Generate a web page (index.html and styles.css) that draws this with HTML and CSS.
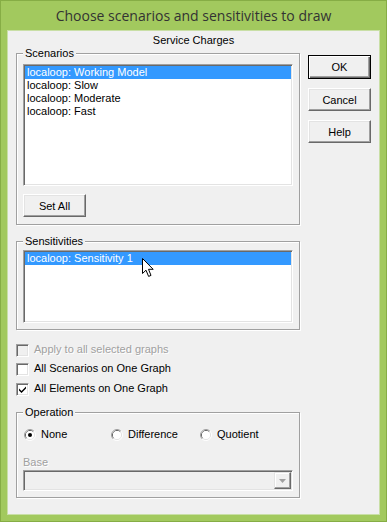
FILE: index.html
```html
<!DOCTYPE html>
<html lang="en">

<head>
  <meta charset="UTF-8">
  <title>Choose scenarios and sensitivities to draw</title>
  <link rel="stylesheet" href="styles.css">
</head>

<body>
  <div class="window">
    <!-- title bar -->
    <div class="titlebar">Choose scenarios and sensitivities to draw</div>

    <div class="client">
      <div class="caption">Service Charges</div>

      <div class="dialog-body">
        <div class="left-col">
          <!-- scenarios -->
          <fieldset class="group group-scenarios">
            <legend>Scenarios</legend>
            <div class="listbox list-scenarios">
              <div class="item selected">localoop: Working Model</div>
              <div class="item">localoop: Slow</div>
              <div class="item">localoop: Moderate</div>
              <div class="item">localoop: Fast</div>
            </div>
            <button class="btn btn-setall">Set All</button>
          </fieldset>

          <!-- sensitivities -->
          <fieldset class="group group-sens">
            <legend>Sensitivities</legend>
            <div class="listbox list-sens">
              <div class="item selected">localoop: Sensitivity 1</div>
              <svg class="cursor" width="13" height="20" viewBox="0 0 13 20">
                <path d="M0.5 0.5 L0.5 15.5 L4 12.2 L6.6 18.4 L9 17.4 L6.5 11.3 L11.2 11.3 Z" fill="#fff" stroke="#000" stroke-width="1" stroke-linejoin="miter"/>
              </svg>
            </div>
          </fieldset>

          <!-- options -->
          <div class="checks">
            <div class="check disabled"><span class="box"></span>Apply to all selected graphs</div>
            <div class="check"><span class="box"></span>All Scenarios on One Graph</div>
            <div class="check"><span class="box">
                <svg width="9" height="9" viewBox="0 0 9 9">
                  <path d="M1 3.5 L3.5 6 L8 1.5 L8 3.5 L3.5 8 L1 5.5 Z" fill="#000"/>
                </svg>
              </span>All Elements on One Graph</div>
          </div>

          <!-- operation -->
          <fieldset class="group group-op">
            <legend>Operation</legend>
            <div class="radios">
              <div class="radio">
                <svg class="radio-mark" width="12" height="12" viewBox="0 0 12 12">
                  <path d="M2.11 9.89 A5.5 5.5 0 0 1 9.89 2.11" fill="none" stroke="#a0a0a0"/>
                  <path d="M9.89 2.11 A5.5 5.5 0 0 1 2.11 9.89" fill="none" stroke="#fff"/>
                  <path d="M2.82 9.18 A4.5 4.5 0 0 1 9.18 2.82" fill="none" stroke="#696969"/>
                  <path d="M9.18 2.82 A4.5 4.5 0 0 1 2.82 9.18" fill="none" stroke="#e3e3e3"/>
                  <circle cx="6" cy="6" r="4" fill="#fff"/>
                  <circle cx="6" cy="6" r="2" fill="#000"/>
                </svg>
                None
              </div>
              <div class="radio">
                <svg class="radio-mark" width="12" height="12" viewBox="0 0 12 12">
                  <path d="M2.11 9.89 A5.5 5.5 0 0 1 9.89 2.11" fill="none" stroke="#a0a0a0"/>
                  <path d="M9.89 2.11 A5.5 5.5 0 0 1 2.11 9.89" fill="none" stroke="#fff"/>
                  <path d="M2.82 9.18 A4.5 4.5 0 0 1 9.18 2.82" fill="none" stroke="#696969"/>
                  <path d="M9.18 2.82 A4.5 4.5 0 0 1 2.82 9.18" fill="none" stroke="#e3e3e3"/>
                  <circle cx="6" cy="6" r="4" fill="#fff"/>
                </svg>
                Difference
              </div>
              <div class="radio">
                <svg class="radio-mark" width="12" height="12" viewBox="0 0 12 12">
                  <path d="M2.11 9.89 A5.5 5.5 0 0 1 9.89 2.11" fill="none" stroke="#a0a0a0"/>
                  <path d="M9.89 2.11 A5.5 5.5 0 0 1 2.11 9.89" fill="none" stroke="#fff"/>
                  <path d="M2.82 9.18 A4.5 4.5 0 0 1 9.18 2.82" fill="none" stroke="#696969"/>
                  <path d="M9.18 2.82 A4.5 4.5 0 0 1 2.82 9.18" fill="none" stroke="#e3e3e3"/>
                  <circle cx="6" cy="6" r="4" fill="#fff"/>
                </svg>
                Quotient
              </div>
            </div>
            <div class="base-label">Base</div>
            <div class="combo">
              <span class="combo-btn">
                <svg width="7" height="4" viewBox="0 0 7 4">
                  <path d="M0 0 L7 0 L3.5 4 Z" fill="#a0a0a0"/>
                </svg>
              </span>
            </div>
          </fieldset>
        </div>

        <!-- dialog buttons -->
        <div class="right-col">
          <button class="btn btn-default">OK</button>
          <button class="btn">Cancel</button>
          <button class="btn">Help</button>
        </div>
      </div>
    </div>
  </div>
</body>

</html>
```

FILE: styles.css
```css
/* page */
html,
body {
  margin: 0;
  padding: 0;
  background-color: #a2c95e;
}

/* window frame */
.window {
  width: 387px;
  height: 522px;
  box-sizing: border-box;
  border: 1px solid #86ad45;
  background-color: #a2c95e;
  padding: 0 6px 6px;
  display: flex;
  flex-direction: column;
}

.titlebar {
  height: 29px;
  line-height: 29px;
  text-align: center;
  font-family: "Open Sans", sans-serif;
  font-size: 14px;
  color: #333;
  white-space: nowrap;
}

/* client area */
.client {
  flex: 1;
  border: 1px solid #c9dfa6;
  background-color: #f0f0f0;
  font-family: "Liberation Sans", Arial, sans-serif;
  font-size: 11px;
  line-height: 13px;
  color: #000;
  padding: 3px 0 0 8px;
}

.caption {
  text-align: center;
  margin-left: -8px;
  height: 13px;
}

.dialog-body {
  display: flex;
  gap: 8px;
}

.left-col {
  width: 284px;
}

.right-col {
  display: flex;
  flex-direction: column;
  gap: 9px;
  padding-top: 8px;
}

/* group boxes */
.group {
  margin: 0;
  padding: 0 6px;
  min-inline-size: 0;
  border: 1px solid #a0a0a0;
  box-shadow: inset 1px 1px 0 #fff, 1px 1px 0 #fff;
}

.group legend {
  padding: 0 2px;
  margin-left: 0;
  line-height: 13px;
  background-color: #f0f0f0;
}

.group-scenarios {
  padding-top: 4px;
  padding-bottom: 7px;
}

.group-sens {
  margin-top: 10px;
  padding-top: 2px;
  padding-bottom: 6px;
}

.group-op {
  margin-top: 5px;
  padding-top: 9px;
  padding-bottom: 6px;
}

/* list boxes */
.listbox {
  position: relative;
  box-sizing: border-box;
  width: 270px;
  background-color: #fff;
  border: 1px solid;
  border-color: #a0a0a0 #fff #fff #a0a0a0;
  box-shadow: inset 1px 1px 0 #696969, inset -1px -1px 0 #e3e3e3;
  padding: 1px;
}

.list-scenarios {
  height: 122px;
}

.list-sens {
  height: 73px;
}

.item {
  height: 13px;
  padding-left: 2px;
  white-space: nowrap;
}

.item.selected {
  background-color: #3399ff;
  color: #fff;
}

.cursor {
  position: absolute;
  left: 118px;
  top: 7px;
}

/* buttons */
.btn {
  box-sizing: border-box;
  width: 63px;
  height: 23px;
  padding: 0;
  font-family: "Liberation Sans", Arial, sans-serif;
  font-size: 11px;
  color: #000;
  background-color: #f0f0f0;
  border: 1px solid;
  border-color: #fff #696969 #696969 #fff;
  box-shadow: inset -1px -1px 0 #a0a0a0, inset 1px 1px 0 #e3e3e3;
}

.btn-setall {
  display: block;
  margin-top: 8px;
}

.btn-default {
  height: 24px;
  border: 1px solid #000;
  box-shadow: inset 1px 1px 0 #fff, inset -1px -1px 0 #696969, inset -2px -2px 0 #a0a0a0;
}

/* check boxes */
.checks {
  margin-top: 13px;
}

.check {
  height: 19px;
  display: flex;
  align-items: flex-start;
  gap: 5px;
  white-space: nowrap;
}

.check:last-child {
  margin-top: 1px;
}

.box {
  box-sizing: border-box;
  width: 13px;
  height: 13px;
  margin-top: 1px;
  background-color: #fff;
  border: 1px solid;
  border-color: #a0a0a0 #fff #fff #a0a0a0;
  box-shadow: inset 1px 1px 0 #696969, inset -1px -1px 0 #e3e3e3;
  display: flex;
  align-items: center;
  justify-content: center;
}

.check.disabled {
  color: #a0a0a0;
  text-shadow: 1px 1px 0 #fff;
}

.check.disabled .box {
  background-color: #f0f0f0;
}

/* radio buttons */
.radios {
  display: grid;
  grid-template-columns: 87px 89px auto;
  margin-left: 1px;
}

.radio {
  display: flex;
  align-items: center;
  gap: 5px;
  height: 13px;
  white-space: nowrap;
}

/* disabled combo */
.base-label {
  margin-top: 15px;
  color: #a0a0a0;
  text-shadow: 1px 1px 0 #fff;
}

.combo {
  box-sizing: border-box;
  width: 270px;
  height: 21px;
  margin-top: 1px;
  background-color: #f0f0f0;
  border: 1px solid;
  border-color: #a0a0a0 #fff #fff #a0a0a0;
  box-shadow: inset 1px 1px 0 #696969, inset -1px -1px 0 #e3e3e3;
  display: flex;
  justify-content: flex-end;
  padding: 1px;
}

.combo-btn {
  box-sizing: border-box;
  width: 17px;
  height: 17px;
  background-color: #f0f0f0;
  border: 1px solid;
  border-color: #e3e3e3 #696969 #696969 #e3e3e3;
  box-shadow: inset -1px -1px 0 #a0a0a0, inset 1px 1px 0 #fff;
  display: flex;
  align-items: center;
  justify-content: center;
}
```
